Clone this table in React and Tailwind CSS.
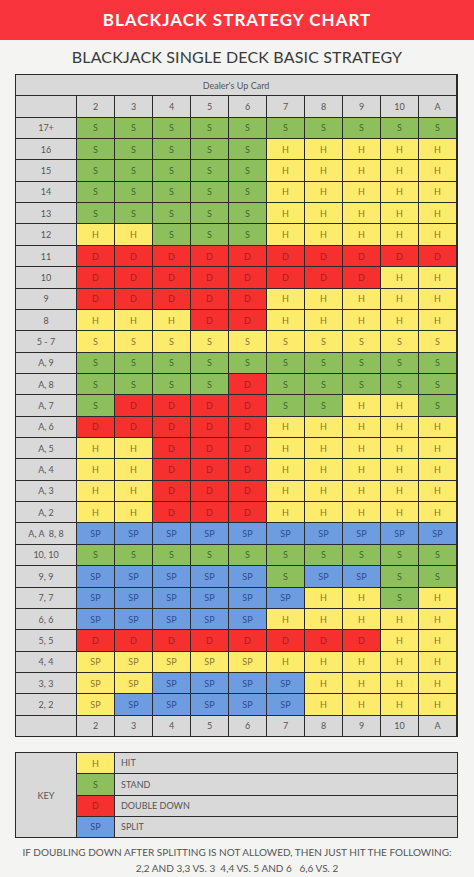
import React from "react";

const cols = ["2", "3", "4", "5", "6", "7", "8", "9", "10", "A"];

const rows = [
  ["17+", "SSSSSSSSSS"],
  ["16", "SSSSSHHHHH"],
  ["15", "SSSSSHHHHH"],
  ["14", "SSSSSHHHHH"],
  ["13", "SSSSSHHHHH"],
  ["12", "HHSSSHHHHH"],
  ["11", "DDDDDDDDDD"],
  ["10", "DDDDDDDDHH"],
  ["9", "DDDDDHHHHH"],
  ["8", "HHHDDHHHHH"],
  ["5 - 7", "ZZZZZZZZZZ"],
  ["A, 9", "SSSSSSSSSS"],
  ["A, 8", "SSSSDSSSSS"],
  ["A, 7", "SDDDDSSHHS"],
  ["A, 6", "DDDDDHHHHH"],
  ["A, 5", "HHDDDHHHHH"],
  ["A, 4", "HHDDDHHHHH"],
  ["A, 3", "HHDDDHHHHH"],
  ["A, 2", "HHDDDHHHHH"],
  ["A, A  8, 8", "PPPPPPPPPP"],
  ["10, 10", "SSSSSSSSSS"],
  ["9, 9", "PPPPPSPPSS"],
  ["7, 7", "PPPPPPHHSH"],
  ["6, 6", "PPPPPHHHHH"],
  ["5, 5", "DDDDDDDDHH"],
  ["4, 4", "YYYYYHHHHH"],
  ["3, 3", "YYPPPPHHHH"],
  ["2, 2", "YPPPPPHHHH"],
];

const styles = {
  H: { cls: "bg-[#fdeb6b] text-[#8a7733]", t: "H" },
  S: { cls: "bg-[#8dc05d] text-[#3f6a2c]", t: "S" },
  D: { cls: "bg-[#f5302f] text-[#a3201f]", t: "D" },
  P: { cls: "bg-[#6e9ce0] text-[#2c4f8e]", t: "SP" },
  Y: { cls: "bg-[#fdeb6b] text-[#8a7733]", t: "SP" },
  Z: { cls: "bg-[#fdeb6b] text-[#8a7733]", t: "S" },
};

const cell = "flex items-center justify-center text-[9px] leading-none";

export default function App() {
  return (
    <div
      className="w-[474px] h-[877px] bg-[#f4f4f2] flex flex-col"
      style={{ fontFamily: "Lato, 'Open Sans', sans-serif" }}
    >
      <div className="h-[40px] bg-[#f9343c] flex items-center justify-center">
        <span className="text-white text-[17px] font-bold tracking-[0.06em]">
          BLACKJACK STRATEGY CHART
        </span>
      </div>
      <div className="h-[34px] flex items-center justify-center">
        <span className="text-[#3a3a3a] text-[16px] tracking-[0.01em]">
          BLACKJACK SINGLE DECK BASIC STRATEGY
        </span>
      </div>

      <div className="mx-[15px] w-[443px] h-[663px] grid grid-cols-[60px_repeat(10,37px)] grid-rows-[repeat(31,1fr)] gap-px bg-[#2b2b2b] border border-[#2b2b2b]">
        <div className={`${cell} col-span-11 bg-[#d9d9d9] text-[#555] text-[9px]`}>
          Dealer's Up Card
        </div>
        <div className="bg-[#d9d9d9]" />
        {cols.map((c) => (
          <div key={"h" + c} className={`${cell} bg-[#d9d9d9] text-[#555]`}>
            {c}
          </div>
        ))}
        {rows.map(([label, codes]) => (
          <React.Fragment key={label}>
            <div className={`${cell} bg-[#d9d9d9] text-[#555] whitespace-pre`}>{label}</div>
            {codes.split("").map((k, i) => (
              <div key={i} className={`${cell} ${styles[k].cls}`}>
                {styles[k].t}
              </div>
            ))}
          </React.Fragment>
        ))}
        <div className="bg-[#d9d9d9]" />
        {cols.map((c) => (
          <div key={"f" + c} className={`${cell} bg-[#d9d9d9] text-[#555]`}>
            {c}
          </div>
        ))}
      </div>

      <div className="mt-[15px] mx-[15px] w-[443px] h-[86px] grid grid-cols-[60px_37px_1fr] grid-rows-4 gap-px bg-[#2b2b2b] border border-[#2b2b2b]">
        <div className={`${cell} row-span-4 bg-[#d9d9d9] text-[#555]`}>KEY</div>
        <div className={`${cell} ${styles.H.cls}`}>H</div>
        <div className="bg-[#d9d9d9] text-[#555] text-[9px] flex items-center pl-[6px]">HIT</div>
        <div className={`${cell} ${styles.S.cls}`}>S</div>
        <div className="bg-[#d9d9d9] text-[#555] text-[9px] flex items-center pl-[6px]">STAND</div>
        <div className={`${cell} ${styles.D.cls}`}>D</div>
        <div className="bg-[#d9d9d9] text-[#555] text-[9px] flex items-center pl-[6px]">DOUBLE DOWN</div>
        <div className={`${cell} ${styles.P.cls}`}>SP</div>
        <div className="bg-[#d9d9d9] text-[#555] text-[9px] flex items-center pl-[6px]">SPLIT</div>
      </div>

      <div className="mt-[6px] flex flex-col items-center text-[#555] text-[10px] leading-[16px] whitespace-pre">
        <span>IF DOUBLING DOWN AFTER SPLITTING IS NOT ALLOWED, THEN JUST HIT THE FOLLOWING:</span>
        <span>{"2,2 AND 3,3 VS. 3  4,4 VS. 5 AND 6   6,6 VS. 2"}</span>
      </div>
    </div>
  );
}
